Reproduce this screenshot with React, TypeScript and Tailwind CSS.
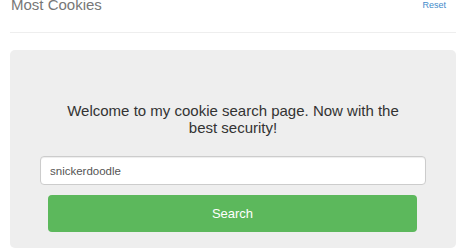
export default function App() {
  return (
    <div className="w-[474px] h-[250px] overflow-hidden bg-white pl-[10px] pr-[18px] font-['Liberation_Sans',Arial,sans-serif]">
      <div className="flex items-start justify-between h-[33px] border-b border-[#eeeeee]">
        <h2 className="ml-[1px] mt-[-3px] text-[15px] leading-[15px] text-[#777777]">
          Most Cookies
        </h2>
        <a href="#" className="mr-[10px] mt-[1px] text-[9px] leading-[9px] text-[#428bca]">
          Reset
        </a>
      </div>
      <div className="mt-[17px] h-[198px] rounded-[5px] bg-[#eeeeee] px-[30px] pt-[52px]">
        <h3 className="mx-auto w-[350px] text-center text-[15px] leading-[17px] text-[#333333]">
          Welcome to my cookie search page. Now with the best security!
        </h3>
        <form className="mt-[20px]" onSubmit={(e) => e.preventDefault()}>
          <input
            type="text"
            defaultValue="snickerdoodle"
            className="block w-full h-[29px] rounded-[4px] border border-[#cccccc] bg-white px-[9px] text-[11.5px] text-[#555555] shadow-[inset_0_1px_1px_rgba(0,0,0,0.075)] outline-none"
          />
          <button
            type="submit"
            className="mt-[10px] ml-[8px] block w-[369px] h-[37px] rounded-[4px] bg-[#5cb85c] text-[13px] text-white"
          >
            Search
          </button>
        </form>
      </div>
    </div>
  );
}
